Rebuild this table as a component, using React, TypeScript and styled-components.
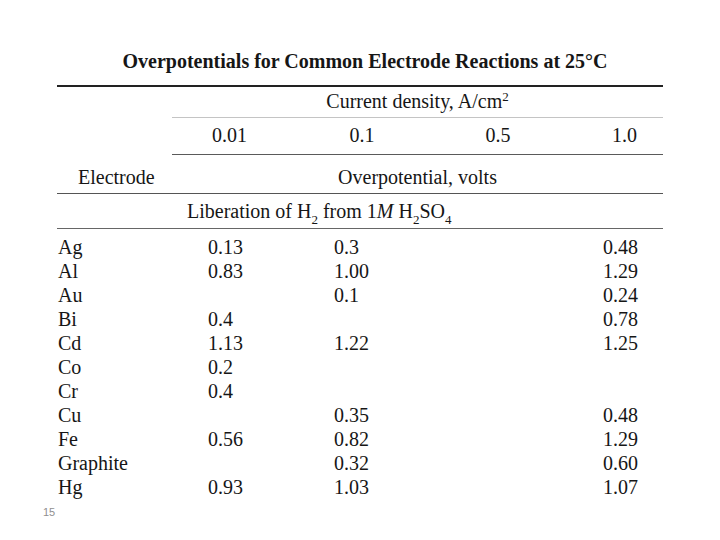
import React from "react";
import styled, { createGlobalStyle } from "styled-components";

const GlobalStyle = createGlobalStyle`
  html, body { margin: 0; padding: 0; background: #ffffff; }
  body { font-family: "Liberation Serif", "Times New Roman", serif; color: #161616; }
`;

const Page = styled.div`
  width: 720px;
  height: 540px;
  overflow: hidden;
  background: #ffffff;
`;

const Title = styled.h1`
  margin: 0;
  padding: 49px 0 0 10px;
  height: 24px;
  line-height: 24px;
  font-size: 20px;
  font-weight: bold;
  text-align: center;
  color: #161616;
  margin-bottom: 12px;
`;

const Table = styled.div`
  margin-left: 57px;
  width: 606px;
  border-top: 2px solid #222;
  font-size: 20px;
`;

const SplitRow = styled.div`
  display: grid;
  grid-template-columns: 115px 1fr;
`;

const SpanCell = styled.div<{ $line: string; $h: number }>`
  height: ${(p) => p.$h}px;
  line-height: ${(p) => p.$h - 2}px;
  text-align: center;
  border-bottom: 1px solid ${(p) => p.$line};
  white-space: nowrap;
`;

const DensityGrid = styled.div`
  display: grid;
  grid-template-columns: 115px 150px 122px 1fr;
  height: 36px;
  line-height: 34px;
  border-bottom: 1px solid #5a5a5a;
`;

const DensityCell = styled.div<{ $right?: boolean }>`
  text-align: ${(p) => (p.$right ? "right" : "center")};
  padding-right: ${(p) => (p.$right ? "26px" : "0")};
`;

const LabelRow = styled.div`
  display: grid;
  grid-template-columns: 115px 1fr;
  padding: 10px 0 4px;
  line-height: 24px;
  border-bottom: 1px solid #555;
`;

const ElectrodeLabel = styled.div`
  padding-left: 21px;
`;

const Centered = styled.div`
  text-align: center;
`;

const ReactionRow = styled.div`
  padding: 5px 0 5px 130px;
  line-height: 24px;
  border-bottom: 1px solid #666;
`;

const Body = styled.div`
  padding-top: 6px;
`;

const DataRow = styled.div`
  display: grid;
  grid-template-columns: 150px 126px 1fr 1fr;
  height: 24px;
  line-height: 24px;
`;

const Cell = styled.div<{ $right?: boolean }>`
  text-align: ${(p) => (p.$right ? "right" : "left")};
  padding-right: ${(p) => (p.$right ? "25px" : "0")};
  padding-left: ${(p) => (p.$right ? "0" : "1px")};
`;

const Sup = styled.sup`
  font-size: 13px;
  line-height: 0;
  vertical-align: 7px;
`;

const Sub = styled.sub`
  font-size: 13px;
  line-height: 0;
  vertical-align: -6px;
`;

const PageNum = styled.div`
  margin: 6px 0 0 43px;
  font-family: "Liberation Sans", Arial, sans-serif;
  font-size: 11px;
  line-height: 14px;
  color: #8f8f8f;
`;

type Row = [string, string, string, string];

const rows: Row[] = [
  ["Ag", "0.13", "0.3", "0.48"],
  ["Al", "0.83", "1.00", "1.29"],
  ["Au", "", "0.1", "0.24"],
  ["Bi", "0.4", "", "0.78"],
  ["Cd", "1.13", "1.22", "1.25"],
  ["Co", "0.2", "", ""],
  ["Cr", "0.4", "", ""],
  ["Cu", "", "0.35", "0.48"],
  ["Fe", "0.56", "0.82", "1.29"],
  ["Graphite", "", "0.32", "0.60"],
  ["Hg", "0.93", "1.03", "1.07"],
];

export default function App() {
  return (
    <Page>
      <GlobalStyle />
      <Title>Overpotentials for Common Electrode Reactions at 25°C</Title>
      <Table>
        <SplitRow>
          <div />
          <SpanCell $line="#c4c4c4" $h={30}>
            Current density, A/cm<Sup>2</Sup>
          </SpanCell>
        </SplitRow>
        <SplitRow>
          <div />
          <DensityGrid>
            <DensityCell>0.01</DensityCell>
            <DensityCell>0.1</DensityCell>
            <DensityCell>0.5</DensityCell>
            <DensityCell $right>1.0</DensityCell>
          </DensityGrid>
        </SplitRow>
        <LabelRow>
          <ElectrodeLabel>Electrode</ElectrodeLabel>
          <Centered>Overpotential, volts</Centered>
        </LabelRow>
        <ReactionRow>
          Liberation of H<Sub>2</Sub> from 1<i>M</i> H<Sub>2</Sub>SO<Sub>4</Sub>
        </ReactionRow>
        <Body>
          {rows.map((r) => (
            <DataRow key={r[0]}>
              <Cell>{r[0]}</Cell>
              <Cell>{r[1]}</Cell>
              <Cell>{r[2]}</Cell>
              <Cell $right>{r[3]}</Cell>
            </DataRow>
          ))}
        </Body>
      </Table>
      <PageNum>15</PageNum>
    </Page>
  );
}
